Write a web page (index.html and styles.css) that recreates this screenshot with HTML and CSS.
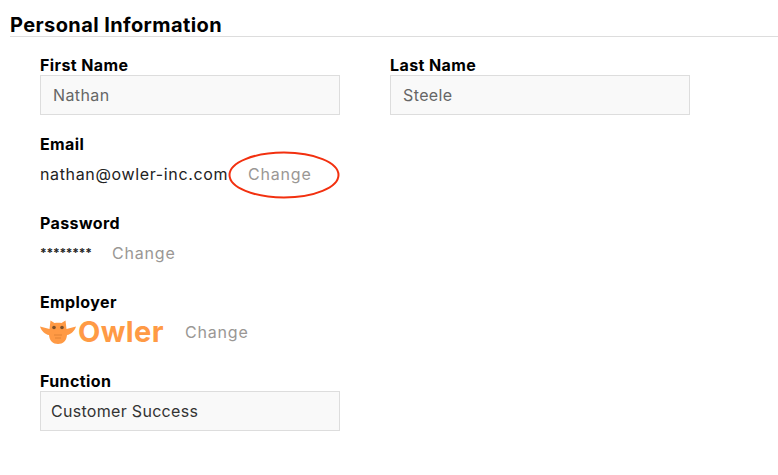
FILE: index.html
```html
<!DOCTYPE html>
<html lang="en">
<head>
<meta charset="utf-8">
<title>Personal Information</title>
<link rel="stylesheet" href="styles.css">
</head>
<body>
<section class="panel">
  <h2 class="title">Personal Information</h2>
  <div class="fields">
    <div class="row">
      <div class="field">
        <div class="label">First Name</div>
        <div class="input muted">Nathan</div>
      </div>
      <div class="field">
        <div class="label">Last Name</div>
        <div class="input muted">Steele</div>
      </div>
    </div>
    <div class="block">
      <div class="label">Email</div>
      <div class="value">
        <span class="text">nathan@owler-inc.com</span>
        <span class="change email-change">Change
          <svg class="ring" viewBox="0 0 112 48" width="112" height="48" aria-hidden="true"><ellipse cx="56" cy="24" rx="54.500" ry="22.500" fill="none" stroke="#f2300f" stroke-width="2"/></svg>
        </span>
      </div>
    </div>
    <div class="block">
      <div class="label">Password</div>
      <div class="value">
        <span class="stars">********</span>
        <span class="change">Change</span>
      </div>
    </div>
    <div class="block">
      <div class="label">Employer</div>
      <div class="value">
        <span class="logo">
          <svg class="owl" viewBox="0 0 36 26" width="36" height="26" aria-hidden="true">
            <path fill="#ff9a45" d="M0 7.500 L9.500 10 L10.500 1.500 L14.500 4 C16.500 3.500 19.500 3.500 21.500 4 L25.500 1.500 L26.500 10 L36 7.500 C34.500 12 31 15.500 27 16 C26.500 22 23 25 18 25 C13 25 9.500 22 9 16 C5 15.500 1.500 12 0 7.500 Z"/>
            <circle cx="14" cy="8.500" r="1.800" fill="#7a4f2a"/>
            <circle cx="22" cy="8.500" r="1.800" fill="#7a4f2a"/>
            <path fill="none" stroke="#d97f33" stroke-width="0.800" d="M14 16 H22 M15 19 H21"/>
          </svg>
          <span class="wordmark">Owler</span>
        </span>
        <span class="change">Change</span>
      </div>
    </div>
    <div class="block last">
      <div class="label">Function</div>
      <div class="input dark">Customer Success</div>
    </div>
  </div>
</section>
</body>
</html>
```
FILE: styles.css
```css
* { box-sizing: border-box; }
html, body { margin: 0; padding: 0; background: #fff; }
body {
  width: 778px;
  height: 475px;
  overflow: hidden;
  font-family: Inter, "Liberation Sans", sans-serif;
  color: #000;
}
.panel { padding: 14px 0 0 10px; }
.title {
  margin: 0;
  height: 23px;
  font-size: 20px;
  line-height: 22px;
  font-weight: 700;
  letter-spacing: 0.4px;
  white-space: nowrap;
  border-bottom: 1px solid #ddd;
}
.fields { padding: 18px 0 0 30px; }
.row { display: flex; gap: 50px; }
.field { width: 300px; }
.label {
  height: 20px;
  font-size: 16px;
  line-height: 18px;
  font-weight: 700;
  letter-spacing: 0.4px;
}
.field .label, .last .label { line-height: 20px; }
.input {
  width: 300px;
  height: 40px;
  background: #f9f9f9;
  border: 1px solid #ddd;
  font-size: 16px;
  line-height: 38px;
}
.muted { padding-left: 12px; color: #666; letter-spacing: 0.4px; }
.dark { padding-left: 10px; color: #333; letter-spacing: 0.3px; }
.block { margin-top: 19px; }
.row + .block { margin-top: 20px; }
.block.last { margin-top: 18px; }
.value {
  display: flex;
  align-items: center;
  height: 40px;
  padding-bottom: 2px;
  font-size: 16px;
}
.text { width: 188px; color: #222; letter-spacing: 0.65px; white-space: nowrap; }
.stars { width: 72px; padding-bottom: 2px; color: #222; font-size: 12px; font-weight: 700; letter-spacing: -0.25px; }
.change { color: #9a9794; letter-spacing: 0.8px; }
.email-change { position: relative; margin-left: 20px; }
.ring { position: absolute; left: -20px; top: -13px; }
.logo { display: flex; align-items: center; width: 145px; }
.owl { flex: none; margin-right: 2px; }
.wordmark {
  font-size: 29px;
  line-height: 30px;
  font-weight: 700;
  letter-spacing: 0.4px;
  color: #ff9a45;
}
```
